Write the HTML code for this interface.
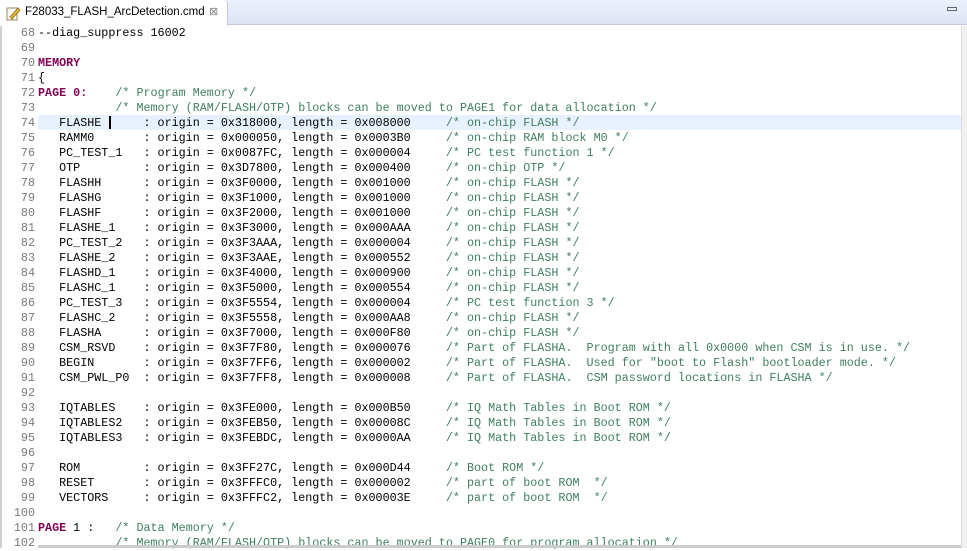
<!DOCTYPE html>
<html><head><meta charset="utf-8"><style>
*{margin:0;padding:0;box-sizing:border-box}
body{width:967px;height:548px;overflow:hidden;background:#fff;position:relative;font-family:"Liberation Sans",sans-serif}
.bar{position:absolute;left:0;top:0;width:967px;height:25px;background:linear-gradient(#edf1fc,#dde4f4);border-bottom:1px solid #c3cbdc}
.tab{position:absolute;left:0;top:0;width:228px;height:26px;background:#fff;border-right:1px solid #c3cbdc;border-radius:0 4px 0 0}
.tt{position:absolute;left:25px;top:6px;font-size:11.5px;color:#000}
.x{position:absolute;left:209px;top:5px;font-size:11px;color:#888}
.min{position:absolute;left:947px;top:7px;width:10px;height:4px;border:1px solid #666}
.ed{position:absolute;left:0;top:26px;width:961px;height:522px;border-left:2px solid #d0d0d0}
.hl{position:absolute;left:36px;top:89px;width:923px;height:15px;background:#e8f2fe}
pre{position:absolute;top:0;font-family:"Liberation Mono",monospace;font-size:11.72px;line-height:15px}
.ln{left:-2px;width:35px;text-align:right;color:#787878}
.code{left:36px;color:#000}
.c{color:#3f7f5f}.k{color:#7f0055;font-weight:bold}
.vs{position:absolute;left:961px;top:26px;width:6px;height:522px;background:#f0f0f0;border-left:1px solid #ddd}
.hs{position:absolute;left:38px;top:545px;width:923px;height:3px;background:#ccc}
.cur{position:absolute;left:107px;top:90px;width:2px;height:13px;background:#000}
</style></head><body>
<div class="bar"><div class="tab">
<svg style="position:absolute;left:5px;top:5px" width="16" height="16" viewBox="0 0 16 16"><rect x="2" y="3" width="10" height="12" fill="#fff" stroke="#9a8a50"/><path d="M5 12 L13 3 L15 5 L7 14 Z" fill="#e8b830" stroke="#8a6a20" stroke-width=".8"/></svg>
<span class="tt">F28033_FLASH_ArcDetection.cmd</span><span class="x">⊠</span></div><div class="min"></div></div>
<div class="ed">
<div class="hl"></div>
<pre class="ln">68
69
70
71
72
73
74
75
76
77
78
79
80
81
82
83
84
85
86
87
88
89
90
91
92
93
94
95
96
97
98
99
100
101
102</pre>
<pre class="code">--diag_suppress 16002

<span class="k">MEMORY</span>
{
<span class="k">PAGE 0:</span>    <span class="c">/* Program Memory */</span>
           <span class="c">/* Memory (RAM/FLASH/OTP) blocks can be moved to PAGE1 for data allocation */</span>
   FLASHE      : origin = 0x318000, length = 0x008000     <span class="c">/* on-chip FLASH */</span>
   RAMM0       : origin = 0x000050, length = 0x0003B0     <span class="c">/* on-chip RAM block M0 */</span>
   PC_TEST_1   : origin = 0x0087FC, length = 0x000004     <span class="c">/* PC test function 1 */</span>
   OTP         : origin = 0x3D7800, length = 0x000400     <span class="c">/* on-chip OTP */</span>
   FLASHH      : origin = 0x3F0000, length = 0x001000     <span class="c">/* on-chip FLASH */</span>
   FLASHG      : origin = 0x3F1000, length = 0x001000     <span class="c">/* on-chip FLASH */</span>
   FLASHF      : origin = 0x3F2000, length = 0x001000     <span class="c">/* on-chip FLASH */</span>
   FLASHE_1    : origin = 0x3F3000, length = 0x000AAA     <span class="c">/* on-chip FLASH */</span>
   PC_TEST_2   : origin = 0x3F3AAA, length = 0x000004     <span class="c">/* on-chip FLASH */</span>
   FLASHE_2    : origin = 0x3F3AAE, length = 0x000552     <span class="c">/* on-chip FLASH */</span>
   FLASHD_1    : origin = 0x3F4000, length = 0x000900     <span class="c">/* on-chip FLASH */</span>
   FLASHC_1    : origin = 0x3F5000, length = 0x000554     <span class="c">/* on-chip FLASH */</span>
   PC_TEST_3   : origin = 0x3F5554, length = 0x000004     <span class="c">/* PC test function 3 */</span>
   FLASHC_2    : origin = 0x3F5558, length = 0x000AA8     <span class="c">/* on-chip FLASH */</span>
   FLASHA      : origin = 0x3F7000, length = 0x000F80     <span class="c">/* on-chip FLASH */</span>
   CSM_RSVD    : origin = 0x3F7F80, length = 0x000076     <span class="c">/* Part of FLASHA.  Program with all 0x0000 when CSM is in use. */</span>
   BEGIN       : origin = 0x3F7FF6, length = 0x000002     <span class="c">/* Part of FLASHA.  Used for "boot to Flash" bootloader mode. */</span>
   CSM_PWL_P0  : origin = 0x3F7FF8, length = 0x000008     <span class="c">/* Part of FLASHA.  CSM password locations in FLASHA */</span>

   IQTABLES    : origin = 0x3FE000, length = 0x000B50     <span class="c">/* IQ Math Tables in Boot ROM */</span>
   IQTABLES2   : origin = 0x3FEB50, length = 0x00008C     <span class="c">/* IQ Math Tables in Boot ROM */</span>
   IQTABLES3   : origin = 0x3FEBDC, length = 0x0000AA     <span class="c">/* IQ Math Tables in Boot ROM */</span>

   ROM         : origin = 0x3FF27C, length = 0x000D44     <span class="c">/* Boot ROM */</span>
   RESET       : origin = 0x3FFFC0, length = 0x000002     <span class="c">/* part of boot ROM  */</span>
   VECTORS     : origin = 0x3FFFC2, length = 0x00003E     <span class="c">/* part of boot ROM  */</span>

<span class="k">PAGE</span> 1 :   <span class="c">/* Data Memory */</span>
           <span class="c">/* Memory (RAM/FLASH/OTP) blocks can be moved to PAGE0 for program allocation */</span></pre>
<div class="cur"></div>
</div>
<div class="vs"></div>
<div class="hs"></div>
</body></html>
